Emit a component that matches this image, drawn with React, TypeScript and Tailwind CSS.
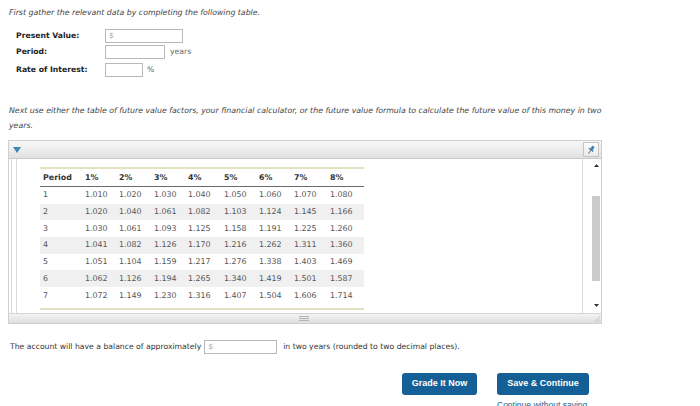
import React from "react";

const rows: string[][] = [
  ["1", "1.010", "1.020", "1.030", "1.040", "1.050", "1.060", "1.070", "1.080"],
  ["2", "1.020", "1.040", "1.061", "1.082", "1.103", "1.124", "1.145", "1.166"],
  ["3", "1.030", "1.061", "1.093", "1.125", "1.158", "1.191", "1.225", "1.260"],
  ["4", "1.041", "1.082", "1.126", "1.170", "1.216", "1.262", "1.311", "1.360"],
  ["5", "1.051", "1.104", "1.159", "1.217", "1.276", "1.338", "1.403", "1.469"],
  ["6", "1.062", "1.126", "1.194", "1.265", "1.340", "1.419", "1.501", "1.587"],
  ["7", "1.072", "1.149", "1.230", "1.316", "1.407", "1.504", "1.606", "1.714"],
];
const headers = ["Period", "1%", "2%", "3%", "4%", "5%", "6%", "7%", "8%"];
const gridCols = "grid grid-cols-[42px_34px_35px_34px_36px_35px_35px_36px_36px]";

export default function App() {
  return (
    <div className="w-[700px] h-[406px] overflow-hidden bg-white font-['DejaVu_Sans',sans-serif] text-[7.7px] text-[#333]">
      <div className="pt-[8px]">
        <p className="pl-[9px] italic leading-[10px] text-[7.8px] text-[#444]">
          First gather the relevant data by completing the following table.
        </p>

        <div className="mt-[11px] pl-[16px] text-[#222]">
          <div className="flex items-center h-[14px]">
            <span className="w-[89px] font-bold text-[7.7px]">Present Value:</span>
            <div className="w-[78px] h-[14px] border border-[#b8b8b8] flex items-center pl-[3px] text-[#aaa]">$</div>
          </div>
          <div className="flex items-center h-[14px] mt-[2px]">
            <span className="w-[89px] font-bold text-[7.7px]">Period:</span>
            <div className="w-[60px] h-[14px] border border-[#b8b8b8]" />
            <span className="ml-[5px] text-[#666]">years</span>
          </div>
          <div className="flex items-center h-[14px] mt-[4px]">
            <span className="w-[89px] font-bold text-[7.7px]">Rate of Interest:</span>
            <div className="w-[38px] h-[14px] border border-[#b8b8b8]" />
            <span className="ml-[4px] text-[#666]">%</span>
          </div>
        </div>

        <p className="mt-[25.5px] pl-[9px] italic leading-[15px] text-[7.82px] text-[#444] whitespace-nowrap">
          Next use either the table of future value factors, your financial calculator, or the future value formula to calculate the future value of this money in two
          <br />
          years.
        </p>

        {/* panel */}
        <div className="mt-[7.5px] ml-[8px] w-[594px] border border-[#cfcfcf] flex flex-col">
          <div className="h-[18px] flex items-center justify-between bg-gradient-to-b from-[#f8f8f8] to-[#e1e1e1] border-b border-[#c9c9c9]">
            <svg width="8" height="6" viewBox="0 0 8 6" className="ml-[4px]">
              <polygon points="0,0 8,0 4,6" fill="#3c86b9" />
            </svg>
            <div className="mr-[2px] w-[16px] h-[15px] border border-[#c3c3c3] bg-gradient-to-b from-[#fdfdfd] to-[#e9e9e9] flex items-center justify-center">
              <svg width="10" height="10" viewBox="0 0 10 10">
                <g transform="rotate(35 5 5)">
                  <rect x="3.6" y="0.5" width="2.8" height="4" rx="0.6" fill="#3a86c0" />
                  <rect x="2.2" y="4.2" width="5.6" height="1.3" rx="0.5" fill="#2f73a8" />
                  <line x1="5" y1="5.5" x2="5" y2="9.5" stroke="#555" strokeWidth="0.8" />
                </g>
              </svg>
            </div>
          </div>

          <div className="h-[154px] flex">
            <div className="ml-[2px] border-l border-[#dadada] w-[5px]" />
            <div className="flex-1 border-l border-r border-[#dadada] pl-[23px] pt-[8px]">
              <div className="w-[324px] border-t-2 border-b-2 border-[#e4e0c2] pb-[4px]">
                <div className={`${gridCols} h-[18px] items-center border-b border-[#6b6b6b] font-bold text-[7.9px] text-[#333]`}>
                  {headers.map((h) => (
                    <div key={h} className="pl-[3px]">{h}</div>
                  ))}
                </div>
                {rows.map((r, i) => (
                  <div
                    key={r[0]}
                    className={`${gridCols} h-[16.7px] items-center text-[7.9px] text-[#555] ${i % 2 === 1 ? "bg-[#f0f0f0]" : ""}`}
                  >
                    {r.map((c, j) => (
                      <div key={j} className="pl-[3px]">{c}</div>
                    ))}
                  </div>
                ))}
              </div>
            </div>
            <div className="w-[8px]" />
            <div className="w-[10px] flex flex-col items-center pt-[5px] pb-[6px]">
              <svg width="5" height="3" viewBox="0 0 5 3"><polygon points="0,3 5,3 2.5,0" fill="#333" /></svg>
              <div className="mt-[29px] w-[8px] h-[85px] bg-[#cbcbcb]" />
              <div className="flex-1" />
              <svg width="5" height="3" viewBox="0 0 5 3"><polygon points="0,0 5,0 2.5,3" fill="#333" /></svg>
            </div>
          </div>

          <div className="h-[10px] flex items-center bg-gradient-to-b from-[#f4f4f4] to-[#dedede] border-t border-[#d4d4d4] relative">
            <div className="ml-[290px] w-[10px] flex flex-col gap-[1px]">
              <div className="h-px bg-[#b5b5b5]" />
              <div className="h-px bg-[#b5b5b5]" />
              <div className="h-px bg-[#b5b5b5]" />
            </div>
            <svg width="7" height="7" viewBox="0 0 7 7" className="absolute right-[1px] bottom-[1px]">
              <line x1="1" y1="7" x2="7" y2="1" stroke="#bbb" strokeWidth="0.7" />
              <line x1="3.5" y1="7" x2="7" y2="3.5" stroke="#bbb" strokeWidth="0.7" />
              <line x1="5.5" y1="7" x2="7" y2="5.5" stroke="#bbb" strokeWidth="0.7" />
            </svg>
          </div>
        </div>

        <div className="mt-[16px] pl-[10px] flex items-center h-[14px] text-[#333]">
          <span>The account will have a balance of approximately</span>
          <div className="ml-[3px] w-[73px] h-[14px] border border-[#b8b8b8] flex items-center pl-[3px] text-[#aaa]">$</div>
          <span className="ml-[6px]">in two years (rounded to two decimal places).</span>
        </div>

        <div className="mt-[19px] pl-[402px] flex gap-[20px] font-['Liberation_Sans',Arial,sans-serif]">
          <div className="w-[75px] h-[22px] rounded-[3px] bg-[#145f96] text-white font-bold text-[9px] flex items-center justify-center">
            Grade It Now
          </div>
          <div className="flex flex-col">
            <div className="w-[92px] h-[22px] rounded-[3px] bg-[#145f96] text-white font-bold text-[9px] flex items-center justify-center">
              Save &amp; Continue
            </div>
            <div className="mt-[5px] text-[8.5px] leading-[10px] text-[#1d5f92] whitespace-nowrap">
              Continue without saving
            </div>
          </div>
        </div>
      </div>
    </div>
  );
}
